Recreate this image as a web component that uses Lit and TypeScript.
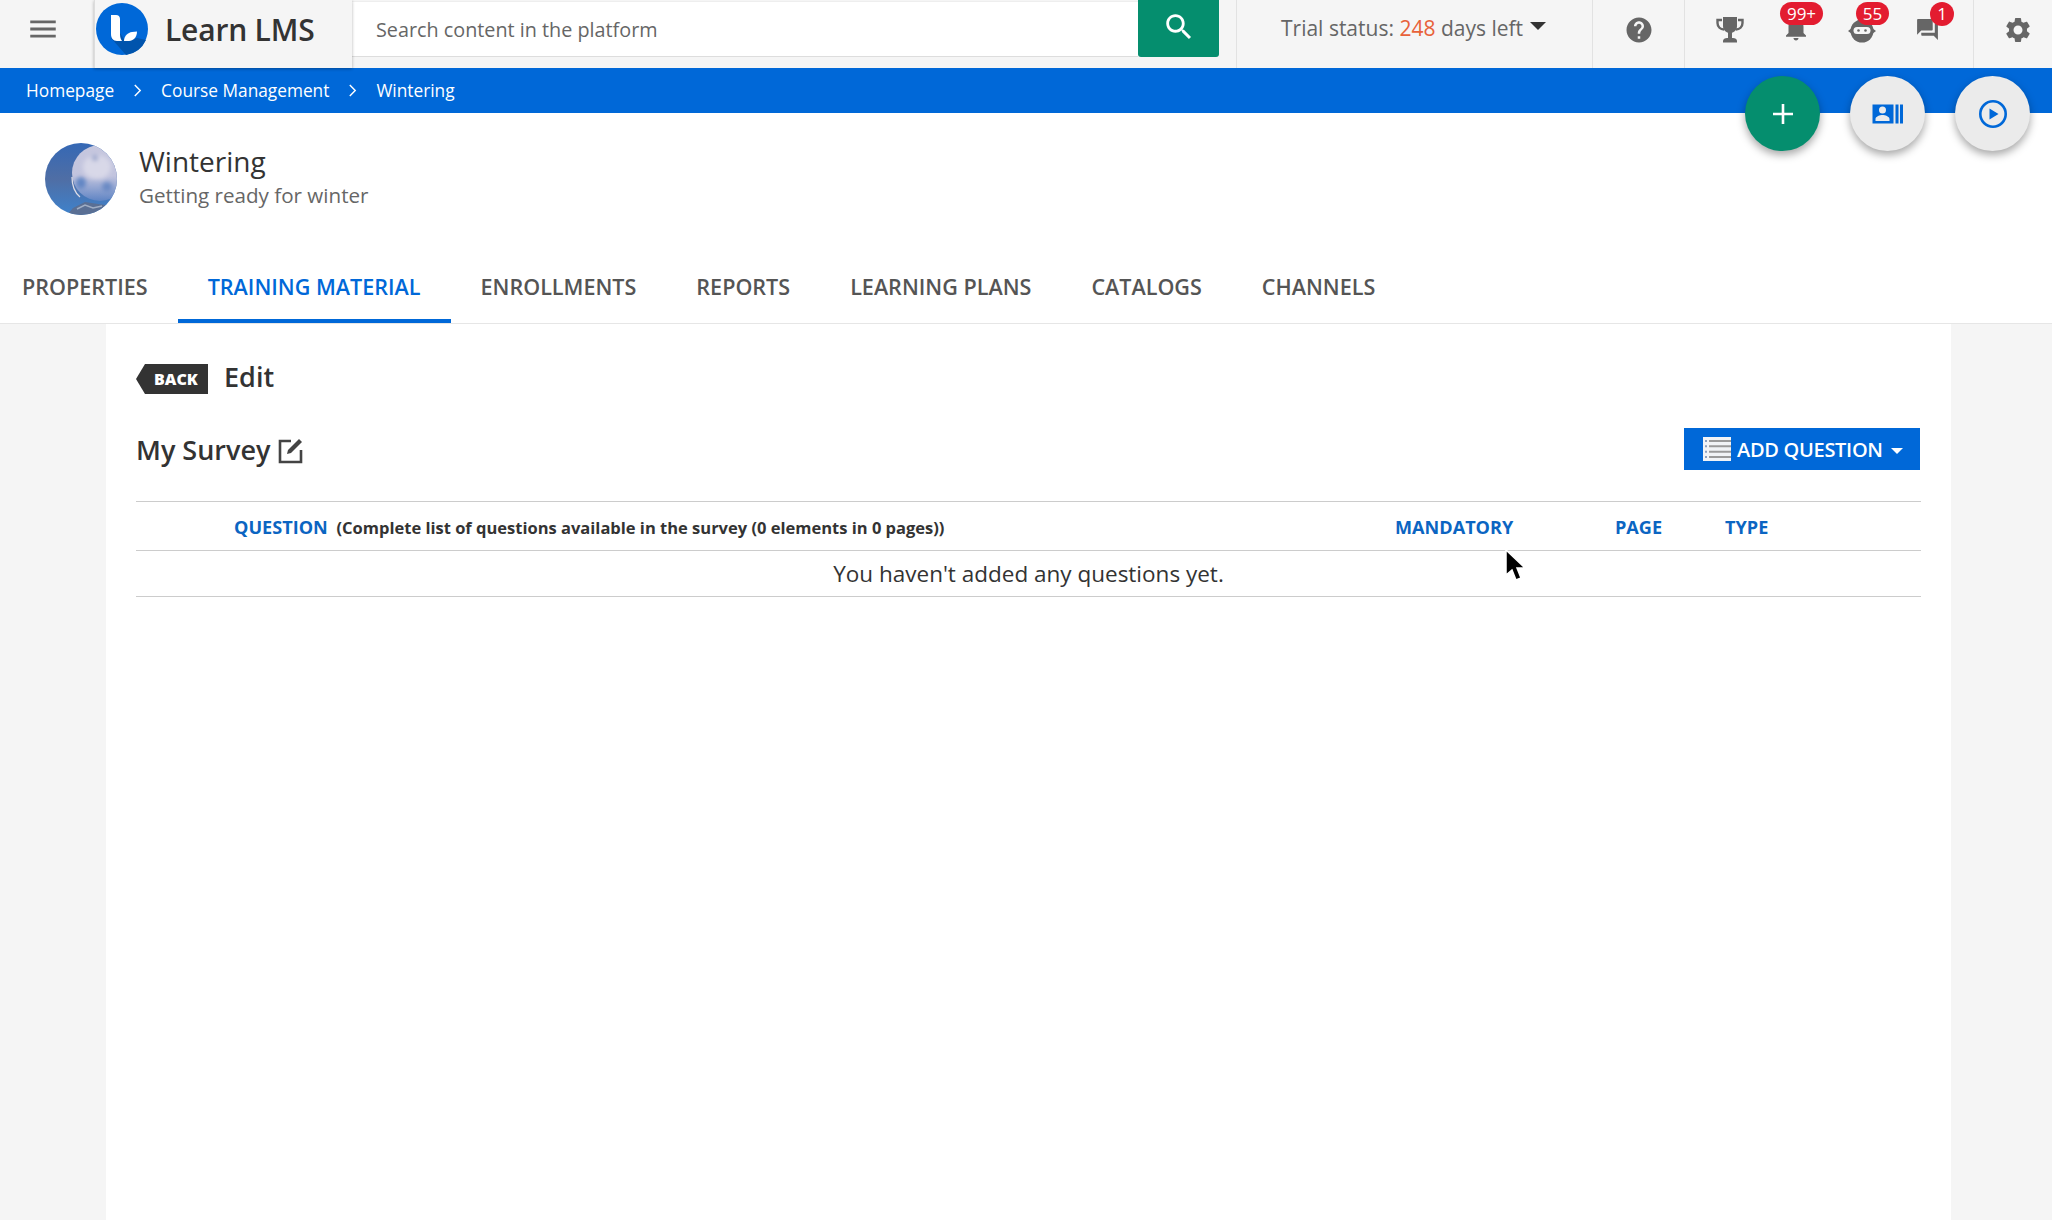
import { LitElement, html, css } from "lit";
import { customElement } from "lit/decorators.js";

const icon = (d: string, cls = "") => html`<svg class="ic ${cls}" viewBox="0 0 24 24"><path d=${d}></path></svg>`;
const P = {
  menu: "M3 18h18v-2H3v2zm0-5h18v-2H3v2zm0-7v2h18V6H3z",
  search: "M15.5 14h-.79l-.28-.27C15.41 12.59 16 11.11 16 9.5 16 5.91 13.09 3 9.5 3S3 5.91 3 9.5 5.91 16 9.5 16c1.61 0 3.09-.59 4.23-1.57l.27.28v.79l5 4.99L20.49 19l-4.99-5zm-6 0C7.01 14 5 11.99 5 9.5S7.01 5 9.5 5 14 7.01 14 9.5 11.99 14 9.5 14z",
  help: "M12 2C6.48 2 2 6.48 2 12s4.48 10 10 10 10-4.48 10-10S17.52 2 12 2zm1 17h-2v-2h2v2zm2.07-7.75l-.9.92C13.45 12.9 13 13.5 13 15h-2v-.5c0-1.1.45-2.1 1.17-2.83l1.24-1.26c.37-.36.59-.86.59-1.41 0-1.1-.9-2-2-2s-2 .9-2 2H8c0-2.21 1.79-4 4-4s4 1.79 4 4c0 .88-.36 1.68-.93 2.25z",
  bell: "M12 22c1.1 0 2-.9 2-2h-4c0 1.1.9 2 2 2zm6-6v-5c0-3.07-1.63-5.64-4.5-6.32V4c0-.83-.67-1.5-1.5-1.5s-1.5.67-1.5 1.5v.68C7.64 5.36 6 7.92 6 11v5l-2 2v1h16v-1l-2-2z",
  forum: "M21 6h-2v9H6v2c0 .55.45 1 1 1h11l4 4V7c0-.55-.45-1-1-1zm-4 6V3c0-.55-.45-1-1-1H3c-.55 0-1 .45-1 1v14l4-4h10c.55 0 1-.45 1-1z",
  gear: "M19.14 12.94c.04-.3.06-.61.06-.94 0-.32-.02-.64-.07-.94l2.03-1.58c.18-.14.23-.41.12-.61l-1.92-3.32c-.12-.22-.37-.29-.59-.22l-2.39.96c-.5-.38-1.03-.7-1.62-.94l-.36-2.54c-.04-.24-.24-.41-.48-.41h-3.84c-.24 0-.43.17-.47.41l-.36 2.54c-.59.24-1.13.57-1.62.94l-2.39-.96c-.22-.08-.47 0-.59.22L2.74 8.87c-.12.21-.08.47.12.61l2.03 1.58c-.05.3-.09.63-.09.94s.02.64.07.94l-2.03 1.58c-.18.14-.23.41-.12.61l1.92 3.32c.12.22.37.29.59.22l2.39-.96c.5.38 1.03.7 1.62.94l.36 2.54c.05.24.24.41.48.41h3.84c.24 0 .44-.17.47-.41l.36-2.54c.59-.24 1.13-.56 1.62-.94l2.39.96c.22.08.47 0 .59-.22l1.92-3.32c.12-.22.07-.47-.12-.61l-2.01-1.58zM12 15.6c-1.98 0-3.6-1.62-3.6-3.6s1.62-3.6 3.6-3.6 3.6 1.62 3.6 3.6-1.62 3.6-3.6 3.6z",
};

const chevron = html`<svg class="chev" viewBox="0 0 10 16"><path d="M2 2l6 6-6 6" fill="none" stroke="#fff" stroke-width="1.6"></path></svg>`;

@customElement("app-root")
export class AppRoot extends LitElement {
  static styles = css`
    :host { display: block; position: relative; width: 2052px; height: 1220px; overflow: hidden; background: #f5f5f5; font-family: "Open Sans", "Noto Sans", sans-serif; color: #333; }
    .ic { display: block; fill: currentColor; }
    .header { display: flex; height: 68px; background: #f5f5f5; color: #666; }
    .burger { width: 94px; display: flex; align-items: center; justify-content: center; padding: 0 8px 10px 0; box-sizing: border-box; }
    .burger .ic { width: 34px; height: 34px; color: #666; }
    .logo { width: 258px; height: 68px; box-sizing: border-box; display: flex; align-items: flex-start; gap: 17px; padding: 3px 0 0 1px; border-left: 1px solid #ddd; box-shadow: 0 1px 3px rgba(0,0,0,.3); background: #f5f5f5; position: relative; z-index: 1; }
    .logo svg { width: 52px; height: 52px; flex: none; }
    .logo span { font-size: 30px; font-weight: 600; color: #333; line-height: 54px; letter-spacing: -.2px; }
    .search { display: flex; width: 867px; height: 56px; margin-top: 1px; }
    .search .field { flex: 1; background: #fff; border-bottom: 1px solid #ddd; border-top: 1px solid #eee; box-sizing: border-box; padding-left: 24px; font-size: 19.8px; color: #666; line-height: 56px; }
    .search .btn { width: 81px; height: 57px; margin-top: -1px; background: #058e6e; border-radius: 0 0 3px 3px; color: #fff; display: flex; align-items: center; justify-content: center; padding-bottom: 4px; box-sizing: border-box; }
    .search .btn .ic { width: 34px; height: 34px; }
    .trial { width: 356px; margin-left: 17px; box-sizing: border-box; border-left: 1px solid #e2e2e2; padding: 13px 0 0 44px; font-size: 21px; line-height: 30px; color: #666; display: flex; gap: 6px; white-space: pre; }
    .trial b { font-weight: 400; color: #e8623a; }
    .trial i { display: block; width: 0; height: 0; margin: 9px 0 0 1px; border: 8px solid transparent; border-top: 8px solid #333; border-bottom: 0; }
    .cell { box-sizing: border-box; border-left: 1px solid #e2e2e2; display: flex; height: 68px; }
    .helpc { width: 92px; justify-content: center; padding-top: 15px; }
    .tools { width: 289px; padding: 15px 0 0 32px; gap: 40px; }
    .gearc { flex: 1; justify-content: center; padding: 15px 0 0 9px; }
    .slot { position: relative; width: 26px; height: 30px; flex: none; }
    .helpc .ic, .gearc .ic { width: 30px; height: 30px; }
    .slot .ic, .slot svg { width: 30px; height: 30px; margin-left: -2px; }
    .slot .bell { margin-top: -2px; }
    .slot .forum { width: 25px; height: 25px; margin: 2px 0 0 0; }
    .badge { position: absolute; top: -13px; height: 23px; border-radius: 12px; background: #e31c30; color: #fff; font-size: 17px; line-height: 24px; text-align: center; }
    .b99 { left: -3px; width: 43px; }
    .b55 { left: 7px; width: 33px; }
    .b1 { left: 15px; width: 24px; height: 24px; line-height: 24px; }
    .crumbs { height: 45px; background: #0068d8; color: #fff; display: flex; align-items: center; font-size: 17.3px; font-weight: 500; padding-left: 26px; gap: 18px; }
    .chev { width: 9px; height: 15px; margin: 0 1px; }
    .fabs { position: absolute; top: 76px; left: 1745px; display: flex; gap: 30px; }
    .fab { width: 75px; height: 75px; border-radius: 50%; background: #ebebeb; box-shadow: 0 4px 8px rgba(0,0,0,.35); display: flex; align-items: center; justify-content: center; color: #0068d8; }
    .fab.green { background: #058e6e; color: #fff; }
    .fab svg { width: 34px; height: 34px; }
    .fab.green svg { width: 24px; height: 24px; }
    .course { background: #fff; height: 124px; box-sizing: border-box; padding: 30px 0 0 45px; display: flex; gap: 22px; align-items: flex-start; }
    .avatar { width: 72px; height: 72px; flex: none; border-radius: 50%; }
    .course h1 { margin: 0; font-size: 28px; font-weight: 400; color: #333; line-height: 36px; }
    .course p { margin: 0; font-size: 20.6px; line-height: 32px; color: #666; }
    .tabs { background: #fff; height: 87px; box-sizing: border-box; display: flex; border-bottom: 1px solid #e6e6e6; font-size: 21.55px; font-weight: 600; color: #555; }
    .tab { padding: 25px 30px 0; line-height: 50px; height: 86px; box-sizing: border-box; white-space: nowrap; }
    .tab:first-child { padding-left: 22px; }
    .tab.on { color: #0068d8; border-bottom: 4px solid #0068d8; }
    .content { margin: 0 101px 0 106px; height: 896px; box-sizing: border-box; background: #fff; padding: 40px 30px 0 30px; }
    .back-row { display: flex; align-items: center; gap: 16px; height: 30px; }
    .back { width: 72px; height: 30px; background: #333; color: #fff; font-size: 16px; font-weight: 800; line-height: 30px; padding-left: 18px; box-sizing: border-box; clip-path: polygon(9px 0, 100% 0, 100% 100%, 9px 100%, 0 50%); }
    .edit { font-size: 27px; font-weight: 600; color: #333; line-height: 30px; margin-top: -4px; }
    .head { display: flex; justify-content: space-between; align-items: flex-start; margin-top: 34px; height: 73px; padding-right: 1px; }
    .title { display: flex; align-items: center; gap: 7px; font-size: 27px; font-weight: 600; line-height: 44px; color: #333; }
    .title svg { width: 27px; height: 27px; }
    .add { width: 236px; height: 42px; background: #0068d8; color: #fff; display: flex; align-items: center; box-sizing: border-box; padding-left: 19px; font-size: 20px; font-weight: 600; gap: 6px; letter-spacing: -.3px; white-space: nowrap; }
    .add svg { width: 28px; height: 24px; flex: none; }
    .add i { display: block; width: 0; height: 0; margin: 4px 0 0 2px; border: 6px solid transparent; border-top: 6px solid #fff; border-bottom: 0; }
    .thead { display: grid; grid-template-columns: 98px 1161px 220px 110px 1fr; align-items: center; height: 46px; padding-top: 2px; border-top: 1px solid #ccc; border-bottom: 1px solid #ccc; font-size: 18.1px; font-weight: 700; color: #0b65c2; white-space: nowrap; }
    .thead small { font-size: 16.5px; color: #333; margin-left: 4px; }
    .empty { height: 45px; border-bottom: 1px solid #ccc; text-align: center; font-size: 22.5px; line-height: 45px; color: #333; }
    .cursor { position: absolute; left: 1503px; top: 549px; width: 22px; height: 33px; }
  `;

  render() {
    return html`
      <div class="header">
        <div class="burger">${icon(P.menu)}</div>
        <div class="logo">
          <svg viewBox="0 0 52 52">
            <circle cx="26" cy="26" r="26" fill="#0068d8"></circle>
            <path d="M24 30 L29 38 L41 35 L50 37 A26 26 0 0 1 30 52 L15 35z" fill="#0054ad"></path>
            <path d="M15 12h5c2.500 0 4 1.500 4 4v13c0 4 0 6 2 9h-5c-4 0-6-3-6-7z" fill="#fff"></path>
            <path d="M28 38c0-5 4-8.500 8-9l5-.5c0 6-4 9.500-8 9.500z" fill="#fff"></path>
          </svg>
          <span>Learn LMS</span>
        </div>
        <div class="search">
          <div class="field">Search content in the platform</div>
          <div class="btn">${icon(P.search)}</div>
        </div>
        <div class="trial"><span>Trial status: <b>248</b> days left</span><i></i></div>
        <div class="cell helpc">${icon(P.help)}</div>
        <div class="cell tools">
          <div class="slot">
            <svg viewBox="0 0 30 30" fill="#666"><path d="M8 2h14v9c0 4-3 7-7 7s-7-3-7-7z"></path><path d="M7 5H2.500v3c0 4 3 6.500 6.500 6.500M23 5h4.500v3c0 4-3 6.500-6.500 6.500" fill="none" stroke="#666" stroke-width="2.400"></path><rect x="13" y="17" width="4" height="7"></rect><path d="M8 26c0-2 2-3 4-3h6c2 0 4 1 4 3v1.500H8z"></path></svg>
          </div>
          <div class="slot">${icon(P.bell, "bell")}<span class="badge b99">99+</span></div>
          <div class="slot">
            <svg viewBox="0 0 30 30" fill="#666"><circle cx="15" cy="16" r="11.500"></circle><path d="M1 16l4-3v6zM29 16l-4-3v6z"></path><rect x="6.500" y="12" width="17" height="7" rx="3.500" fill="#f5f5f5"></rect><circle cx="11.500" cy="15.500" r="1.300"></circle><circle cx="18.500" cy="15.500" r="1.300"></circle></svg>
            <span class="badge b55">55</span>
          </div>
          <div class="slot">${icon(P.forum, "forum")}<span class="badge b1">1</span></div>
        </div>
        <div class="cell gearc">${icon(P.gear)}</div>
      </div>
      <div class="crumbs"><span>Homepage</span>${chevron}<span>Course Management</span>${chevron}<span>Wintering</span></div>
      <div class="fabs">
        <div class="fab green"><svg viewBox="0 0 24 24"><path d="M12 2v20M2 12h20" stroke="#fff" stroke-width="2.600" fill="none"></path></svg></div>
        <div class="fab"><svg viewBox="0 0 34 34"><path d="M1.500 7.500h21v19h-21z M11.500 9.500a3.500 3.500 0 1 0 0 7 3.500 3.500 0 0 0 0-7z M4.500 24h14v-2c0-2.500-4.500-4-7-4s-7 1.500-7 4z" fill="currentColor" fill-rule="evenodd"></path><rect x="24.500" y="7.500" width="3" height="19" fill="currentColor"></rect><rect x="29" y="7.500" width="3" height="19" fill="currentColor"></rect></svg></div>
        <div class="fab"><svg viewBox="0 0 34 34"><circle cx="17" cy="17" r="12.700" fill="none" stroke="currentColor" stroke-width="2.600"></circle><path d="M13.500 11.500v11l9-5.500z" fill="currentColor"></path></svg></div>
      </div>
      <div class="course">
        <svg class="avatar" viewBox="0 0 72 72">
          <defs>
            <linearGradient id="sky" x1="0" y1="0" x2="0" y2="1"><stop offset="0" stop-color="#3568b5"></stop><stop offset=".5" stop-color="#4f6ea5"></stop><stop offset="1" stop-color="#3e82cc"></stop></linearGradient>
            <linearGradient id="moon" x1="0" y1="0" x2="0" y2="1"><stop offset="0" stop-color="#c6c7de"></stop><stop offset=".55" stop-color="#c2c4de"></stop><stop offset="1" stop-color="#5f84c4"></stop></linearGradient>
            <filter id="soft"><feGaussianBlur stdDeviation="2.200"></feGaussianBlur></filter>
          </defs>
          <rect width="72" height="72" fill="url(#sky)"></rect>
          <circle cx="55" cy="30" r="28" fill="url(#moon)"></circle>
          <g filter="url(#soft)">
            <ellipse cx="52" cy="24" rx="14" ry="12" fill="#d8d8e8"></ellipse>
            <ellipse cx="36" cy="40" rx="5" ry="6" fill="#6286c4"></ellipse>
            <ellipse cx="62" cy="44" rx="5" ry="5" fill="#6a8ac4"></ellipse>
            <circle cx="50" cy="15" r="3" fill="#9aa6cc"></circle>
          </g>
          <path d="M27 34c0 8 2 15 8 20" fill="none" stroke="#dcdce6" stroke-width="1.300"></path>
          <path d="M22 72 L28 65 L40 59 L60 62 L72 72z" fill="#5a6f94"></path>
          <path d="M32 66l8-4 8 3 9-2" fill="none" stroke="#9fadc4" stroke-width="1.500"></path>
        </svg>
        <div><h1>Wintering</h1><p>Getting ready for winter</p></div>
      </div>
      <div class="tabs">
        <div class="tab">PROPERTIES</div>
        <div class="tab on">TRAINING MATERIAL</div>
        <div class="tab">ENROLLMENTS</div>
        <div class="tab">REPORTS</div>
        <div class="tab">LEARNING PLANS</div>
        <div class="tab">CATALOGS</div>
        <div class="tab">CHANNELS</div>
      </div>
      <div class="content">
        <div class="back-row"><div class="back">BACK</div><div class="edit">Edit</div></div>
        <div class="head">
          <div class="title">My Survey
            <svg viewBox="0 0 27 27"><path d="M14 4H3v21h21V13" fill="none" stroke="#444" stroke-width="2.600"></path><path d="M10 17l1-4L22 2l3 3-11 11z" fill="#444"></path></svg>
          </div>
          <div class="add">
            <svg viewBox="0 0 28 24"><rect width="28" height="24" fill="#f1f3f6"></rect><path d="M6 4h22M6 9.300h22M6 14.700h22M6 20h22" stroke="#9a9a9a" stroke-width="2"></path><path d="M2 4h2M2 9.300h2M2 14.700h2M2 20h2" stroke="#8aa0c0" stroke-width="2"></path></svg>
            <span>ADD QUESTION</span><i></i>
          </div>
        </div>
        <div class="thead">
          <span></span>
          <span>QUESTION <small>(Complete list of questions available in the survey (0 elements in 0 pages))</small></span>
          <span>MANDATORY</span><span>PAGE</span><span>TYPE</span>
        </div>
        <div class="empty">You haven't added any questions yet.</div>
      </div>
      <svg class="cursor" viewBox="0 0 22 33"><path d="M3 1v25l6-5 4 10 5-2-4-10h8z" fill="#000" stroke="#fff" stroke-width="1.500"></path></svg>
    `;
  }
}
